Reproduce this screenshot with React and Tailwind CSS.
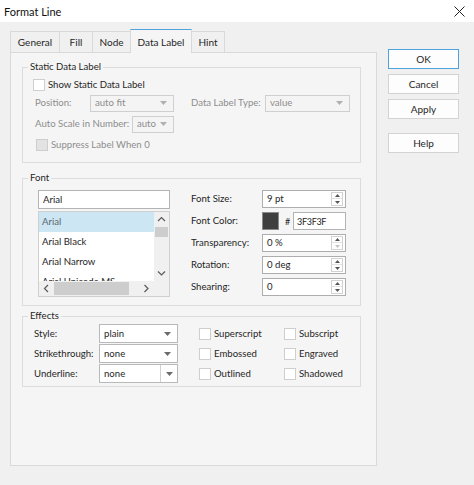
import React from 'react';

const Arrow = ({ color = '#6b6b6b' }) => (
    <svg width="7" height="4" viewBox="0 0 7 4">
        <path d="M0 0H7L3.5 4Z" fill={color} />
    </svg>
);

const Chevron = ({ dir }) => {
    const d = {
        up: 'M1 5L4.5 1.5L8 5',
        down: 'M1 1.5L4.5 5L8 1.5',
        left: 'M5 1L1.5 4.5L5 8',
        right: 'M1.5 1L5 4.5L1.5 8',
    }[dir];
    const vertical = dir === 'up' || dir === 'down';
    return (
        <svg width={vertical ? 9 : 7} height={vertical ? 7 : 9} viewBox={vertical ? '0 0 9 7' : '0 0 7 9'}>
            <path d={d} fill="none" stroke="#5a5a5a" strokeWidth="1.2" />
        </svg>
    );
};

const Tri = ({ up, color = '#555' }) => (
    <svg width="5" height="3" viewBox="0 0 5 3">
        <path d={up ? 'M0 3H5L2.5 0Z' : 'M0 0H5L2.5 3Z'} fill={color} />
    </svg>
);

const Check = ({ disabled }) => (
    <span
        className={
            disabled
                ? 'w-[12px] h-[12px] shrink-0 bg-[#e3e3e3] border border-[#cdcdcd]'
                : 'w-[12px] h-[12px] shrink-0 bg-white border border-[#cfcfcf]'
        }
    />
);

const DisabledCombo = ({ width, value }) => (
    <div className={`${width} h-[17px] shrink-0 bg-[#f4f4f4] border border-[#cfcfcf] flex items-center justify-between pl-[4px] pr-[6px] text-[#8d8d8d]`}>
        <span>{value}</span>
        <Arrow color="#b0b0b0" />
    </div>
);

const Combo = ({ value, split }) => (
    <div className="w-[79px] h-[19px] shrink-0 bg-white border border-[#b9b9b9] flex items-center justify-between pl-[4px]">
        <span>{value}</span>
        {split ? (
            <span className="h-full w-[17px] border-l border-[#d0d0d0] flex items-center justify-center">
                <Arrow />
            </span>
        ) : (
            <span className="pr-[6px] flex items-center">
                <Arrow />
            </span>
        )}
    </div>
);

const Spinner = ({ value, downDisabled }) => (
    <div className="w-[84px] h-[18px] bg-white border border-[#adadad] flex items-center justify-between pl-[4px] pr-[2px]">
        <span>{value}</span>
        <div className="w-[12px] h-[14px] border border-[#d2d2d2] flex flex-col">
            <span className="h-1/2 flex items-center justify-center border-b border-[#e2e2e2]">
                <Tri up />
            </span>
            <span className="h-1/2 flex items-center justify-center">
                <Tri color={downDisabled ? '#c4c4c4' : '#555'} />
            </span>
        </div>
    </div>
);

const tabs = [
    { name: 'General', w: 'w-[50px]' },
    { name: 'Fill', w: 'w-[34px]' },
    { name: 'Node', w: 'w-[39px]' },
    { name: 'Data Label', w: 'w-[62px]', active: true },
    { name: 'Hint', w: 'w-[34px]' },
];

const fonts = ['Arial', 'Arial Black', 'Arial Narrow', 'Arial Unicode MS'];

export default function App() {
    return (
        <div className="w-[474px] h-[485px] bg-[#f0f0f0] text-[#262626] font-['Lato',sans-serif] text-[9.6px] leading-none whitespace-nowrap overflow-hidden flex flex-col">
            {/* title bar */}
            <div className="h-[22px] shrink-0 bg-white flex items-center justify-between pl-[4px] pr-[9px]">
                <span className="text-[11px] text-[#111]">Format Line</span>
                <svg width="11" height="11" viewBox="0 0 11 11">
                    <path d="M0.5 0.5L10.5 10.5M10.5 0.5L0.5 10.5" stroke="#222" strokeWidth="1" />
                </svg>
            </div>

            <div className="flex items-start pl-[10px] pt-[7px]">
                {/* tab control */}
                <div className="w-[367px] flex flex-col">
                    <div className="h-[23px] flex items-end text-[10px]">
                        {tabs.map((t, i) =>
                            t.active ? (
                                <div
                                    key={t.name}
                                    className={`${t.w} h-[24px] -mb-px -ml-px relative z-10 bg-[#f5f5f5] border-x border-[#d9d9d9] border-t border-t-[#4ea3dc] flex items-center justify-center`}
                                >
                                    {t.name}
                                </div>
                            ) : (
                                <div
                                    key={t.name}
                                    className={`${t.w} h-[21px] ${i > 0 ? '-ml-px' : ''} bg-[#f0f0f0] border border-b-0 border-[#d9d9d9] flex items-center justify-center`}
                                >
                                    {t.name}
                                </div>
                            )
                        )}
                    </div>

                    <div className="h-[414px] bg-[#f5f5f5] border border-[#d9d9d9] pl-[11px] pt-[6px]">
                        {/* Static Data Label */}
                        <fieldset className="w-[339px] border border-[#dcdcdc] pl-[5px] pr-[5px] pb-[8px]">
                            <legend className="px-[2px] leading-[16px]">Static Data Label</legend>
                            <div className="mt-[1px] h-[18px] flex items-center pl-[5px]">
                                <Check />
                                <span className="ml-[3px]">Show Static Data Label</span>
                            </div>
                            <div className="h-[18px] flex items-center pl-[7px] text-[#8d8d8d]">
                                <span className="w-[55px] shrink-0">Position:</span>
                                <DisabledCombo width="w-[84px]" value="auto fit" />
                                <span className="ml-[17px] w-[74px] shrink-0">Data Label Type:</span>
                                <DisabledCombo width="w-[85px]" value="value" />
                            </div>
                            <div className="mt-[3px] h-[18px] flex items-center pl-[7px] text-[#8d8d8d]">
                                <span className="w-[97px] shrink-0">Auto Scale in Number:</span>
                                <DisabledCombo width="w-[42px]" value="auto" />
                            </div>
                            <div className="mt-[3px] h-[18px] flex items-center pl-[8px] text-[#8d8d8d]">
                                <Check disabled />
                                <span className="ml-[3px]">Suppress Label When 0</span>
                            </div>
                        </fieldset>

                        {/* Font */}
                        <fieldset className="mt-[7px] w-[339px] border border-[#dcdcdc] pl-[5px] pr-[5px] pb-[8px]">
                            <legend className="px-[2px] leading-[16px]">Font</legend>
                            <div className="flex items-start">
                                <div className="ml-[10px] mt-[4px] w-[132px] flex flex-col">
                                    <div className="h-[19px] bg-white border border-[#b3b3b3] flex items-center pl-[4px]">Arial</div>
                                    <div className="mt-[2px] h-[86px] bg-white border border-[#cfcfcf] flex flex-col">
                                        <div className="flex-1 flex overflow-hidden">
                                            <div className="flex-1 overflow-hidden">
                                                {fonts.map((f, i) => (
                                                    <div
                                                        key={f}
                                                        className={`h-[20px] flex items-center pl-[3px] ${i === 0 ? 'bg-[#cce6f4] text-[#5a6670]' : ''}`}
                                                    >
                                                        {f}
                                                    </div>
                                                ))}
                                            </div>
                                            <div className="w-[15px] bg-[#f0f0f0] flex flex-col items-center">
                                                <span className="h-[15px] flex items-center justify-center"><Chevron dir="up" /></span>
                                                <span className="w-[13px] h-[10px] bg-[#cdcdcd]" />
                                                <span className="flex-1" />
                                                <span className="h-[15px] flex items-center justify-center"><Chevron dir="down" /></span>
                                            </div>
                                        </div>
                                        <div className="h-[15px] flex">
                                            <div className="flex-1 bg-[#f0f0f0] flex items-center">
                                                <span className="w-[15px] flex justify-center"><Chevron dir="left" /></span>
                                                <span className="w-[75px] h-[13px] bg-[#cdcdcd]" />
                                                <span className="flex-1" />
                                                <span className="w-[15px] flex justify-center"><Chevron dir="right" /></span>
                                            </div>
                                            <div className="w-[15px] bg-[#f0f0f0]" />
                                        </div>
                                    </div>
                                </div>

                                <div className="ml-[21px] mt-[4px] flex flex-col gap-[4px]">
                                    <div className="h-[18px] flex items-center">
                                        <span className="w-[71px]">Font Size:</span>
                                        <Spinner value="9 pt" />
                                    </div>
                                    <div className="h-[18px] flex items-center">
                                        <span className="w-[71px]">Font Color:</span>
                                        <span className="w-[17px] h-[18px] bg-[#3f3f3f] border border-[#8a8a8a]" />
                                        <span className="ml-[6px] w-[8px] text-[9px]">#</span>
                                        <div className="w-[53px] h-[18px] bg-white border border-[#b3b3b3] flex items-center pl-[3px] text-[9px] tracking-[-0.3px]">3F3F3F</div>
                                    </div>
                                    <div className="h-[18px] flex items-center">
                                        <span className="w-[71px]">Transparency:</span>
                                        <Spinner value="0 %" downDisabled />
                                    </div>
                                    <div className="h-[18px] flex items-center">
                                        <span className="w-[71px]">Rotation:</span>
                                        <Spinner value="0 deg" />
                                    </div>
                                    <div className="h-[18px] flex items-center">
                                        <span className="w-[71px]">Shearing:</span>
                                        <Spinner value="0" />
                                    </div>
                                </div>
                            </div>
                        </fieldset>

                        {/* Effects */}
                        <fieldset className="mt-[2px] w-[339px] border border-[#dcdcdc] pl-[5px] pr-[5px] pb-[3px]">
                            <legend className="px-[2px] leading-[16px]">Effects</legend>
                            <div className="flex flex-col gap-[1px]">
                                {[
                                    ['Style:', 'plain', false, 'Superscript', 'Subscript'],
                                    ['Strikethrough:', 'none', false, 'Embossed', 'Engraved'],
                                    ['Underline:', 'none', true, 'Outlined', 'Shadowed'],
                                ].map(([label, value, split, a, b]) => (
                                    <div key={label} className="h-[19px] flex items-center">
                                        <span className="ml-[6px] w-[65px] shrink-0">{label}</span>
                                        <Combo value={value} split={split} />
                                        <div className="ml-[21px] w-[85px] flex items-center">
                                            <Check />
                                            <span className="ml-[3px]">{a}</span>
                                        </div>
                                        <div className="flex items-center">
                                            <Check />
                                            <span className="ml-[3px]">{b}</span>
                                        </div>
                                    </div>
                                ))}
                            </div>
                        </fieldset>
                    </div>
                </div>

                {/* buttons */}
                <div className="ml-[11px] mt-[20px] w-[71px] flex flex-col gap-[5px] text-[10px]">
                    <button className="h-[20px] bg-[#fdfdfd] border border-[#4ea3dc]">OK</button>
                    <button className="h-[20px] bg-[#fdfdfd] border border-[#d3d3d3]">Cancel</button>
                    <button className="h-[20px] bg-[#fdfdfd] border border-[#d3d3d3]">Apply</button>
                    <button className="mt-[9px] h-[20px] bg-[#fdfdfd] border border-[#d3d3d3]">Help</button>
                </div>
            </div>
        </div>
    );
}
